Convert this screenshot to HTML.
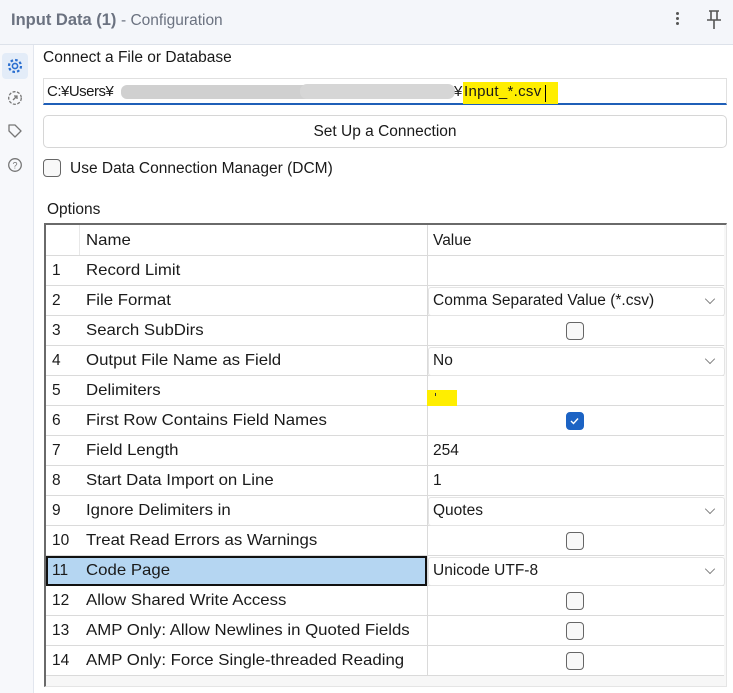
<!DOCTYPE html>
<html><head><meta charset="utf-8"><style>
*{box-sizing:border-box;margin:0;padding:0}
body{width:733px;height:693px;background:#fff;font-family:"Liberation Sans",Arial,sans-serif;position:relative;overflow:hidden;color:#1a1a1a}
.a{position:absolute}
.hdr{left:0;top:0;width:733px;height:45px;background:#f4f6fa;border-bottom:1px solid #dde2ea}
.side{left:0;top:45px;width:34px;height:648px;background:#f7f8fb;border-right:1px solid #e2e6ee}
.t{font-size:15.5px;white-space:nowrap}
.row{position:absolute;left:46px;width:678px;height:30px;border-bottom:1px solid #dadada}
.num{position:absolute;left:6px;top:6px;font-size:15.5px}
.nm{position:absolute;left:40px;top:6px;font-size:16px;white-space:nowrap;transform:scaleX(1.05);transform-origin:left}
.vc{position:absolute;left:381px;top:0;width:1px;height:30px;background:#dadada}
.val{position:absolute;left:387px;top:6px;font-size:15.5px}
.dd{position:absolute;left:383px;top:2px;width:295px;height:27px;background:#fff;border-radius:2px;box-shadow:0 0 0 1px #e4e4e4}
.dd span{position:absolute;left:4px;top:4px;font-size:15.5px;white-space:nowrap}
.dd i{position:absolute;right:10px;top:7px;width:8px;height:8px;border-right:1.3px solid #777;border-bottom:1.3px solid #777;transform:rotate(45deg) scale(.9)}
.cb{position:absolute;left:520px;top:6px;width:18px;height:18px;border:1.5px solid #666;border-radius:4px;background:#f8f8f8}
</style></head><body>
<div class="a hdr"></div>
<div class="a t" style="left:11px;top:11px;color:#6b7280;font-size:16.5px"><b>Input Data (1)</b> <span style="font-size:15.5px">- Configuration</span></div>
<div class="a" style="left:676px;top:12px;width:3px;height:3px;background:#555;border-radius:2px;box-shadow:0 5px 0 #555,0 10px 0 #555"></div>
<svg class="a" style="left:705px;top:9px" width="18" height="22" viewBox="0 0 18 22"><path d="M4 2h10M6 2v9M12 2v9M2 11h14M9 11v9" stroke="#555" stroke-width="1.6" fill="none"/></svg>
<div class="a side"></div>
<div class="a" style="left:2px;top:53px;width:26px;height:26px;background:#e3ecf8;border-radius:4px"></div>
<svg class="a" style="left:6px;top:57px" width="18" height="18" viewBox="0 0 18 18"><circle cx="9" cy="9" r="2.6" fill="none" stroke="#2b6fd0" stroke-width="1.6"/><circle cx="9" cy="9" r="6" fill="none" stroke="#2b6fd0" stroke-width="2.2" stroke-dasharray="2.6 2.1"/></svg>
<svg class="a" style="left:7px;top:90px" width="16" height="16" viewBox="0 0 16 16"><circle cx="8" cy="8" r="6.3" fill="none" stroke="#777" stroke-width="1.3" stroke-dasharray="3 1.5"/><path d="M6 10l4-4M7 6h3v3" stroke="#777" stroke-width="1.3" fill="none"/></svg>
<svg class="a" style="left:7px;top:123px" width="16" height="16" viewBox="0 0 16 16"><path d="M2 2h6l6 6-6 6-6-6z" fill="none" stroke="#777" stroke-width="1.3" stroke-linejoin="round"/></svg>
<svg class="a" style="left:7px;top:157px" width="16" height="16" viewBox="0 0 16 16"><circle cx="8" cy="8" r="6.3" fill="none" stroke="#777" stroke-width="1.3"/><text x="8" y="11.5" font-size="9" text-anchor="middle" fill="#777" font-family="Liberation Sans">?</text></svg>

<div class="a t" style="left:43px;top:49px">Connect a File or Database</div>
<div class="a" style="left:43px;top:78px;width:684px;height:27px;border:1px solid #e0e0e0;border-bottom:2px solid #1f5fb8;background:#fff"></div>
<div class="a t" style="left:47px;top:83px;font-size:15px;letter-spacing:-0.5px">C:¥Users¥</div>
<div class="a" style="left:121px;top:85px;width:195px;height:14px;background:#d0d0d0;border-radius:6px"></div>
<div class="a" style="left:300px;top:84px;width:155px;height:15px;background:#d6d6d6;border-radius:7px"></div>
<div class="a t" style="left:454px;top:83px;font-size:15px">¥</div>
<div class="a" style="left:463px;top:82px;width:95px;height:22px;background:#ffee00"></div>
<div class="a t" style="left:464px;top:83px;font-size:15px;letter-spacing:0.3px">Input_*.csv</div>
<div class="a" style="left:545px;top:85px;width:1px;height:17px;background:#000"></div>
<div class="a" style="left:43px;top:115px;width:684px;height:33px;border:1px solid #d6d6d6;border-radius:5px;background:#fff"></div>
<div class="a t" style="left:0;top:123px;width:770px;text-align:center">Set Up a Connection</div>
<div class="a" style="left:43px;top:159px;width:18px;height:18px;border:1.5px solid #666;border-radius:4px;background:#f8f8f8"></div>
<div class="a t" style="left:70px;top:160px">Use Data Connection Manager (DCM)</div>
<div class="a t" style="left:47px;top:201px">Options</div>

<div class="a" style="left:44px;top:223px;width:683px;height:464px;border:2px solid #6a6a6a;border-right:1px solid #e5e5e5;border-bottom:1px solid #e5e5e5;background:#f7f7f7"></div>
<div class="a" style="left:46px;top:225px;width:678px;height:450px;background:#fff"></div>
<div class="row" style="top:225px;height:31px"><div class="a" style="left:33px;top:0;width:1px;height:30px;background:#e8e8e8"></div><div class="nm" style="top:7px">Name</div><div class="vc" style="height:31px"></div><div class="val" style="top:7px">Value</div></div>
<div class="row" style="top:256px"><div class="num">1</div><div class="nm">Record Limit</div><div class="vc"></div></div>
<div class="row" style="top:286px"><div class="num">2</div><div class="nm">File Format</div><div class="vc"></div><div class="dd"><span>Comma Separated Value (*.csv)</span><i></i></div></div>
<div class="row" style="top:316px"><div class="num">3</div><div class="nm">Search SubDirs</div><div class="vc"></div><div class="cb"></div></div>
<div class="row" style="top:346px"><div class="num">4</div><div class="nm">Output File Name as Field</div><div class="vc"></div><div class="dd"><span>No</span><i></i></div></div>
<div class="row" style="top:376px"><div class="num">5</div><div class="nm">Delimiters</div><div class="vc"></div><div class="a" style="left:381px;top:14px;width:30px;height:16px;background:#ffee00"></div><div class="a" style="left:389px;top:17px;width:1px;height:3px;background:#333"></div></div>
<div class="row" style="top:406px"><div class="num">6</div><div class="nm">First Row Contains Field Names</div><div class="vc"></div><div class="cb" style="background:#1c63c4;border-color:#1c63c4"><svg width="15" height="15" viewBox="0 0 15 15" style="position:absolute;left:0;top:0"><path d="M4 8l2.5 2.5L11 5.5" stroke="#fff" stroke-width="1.4" fill="none"/></svg></div></div>
<div class="row" style="top:436px"><div class="num">7</div><div class="nm">Field Length</div><div class="vc"></div><div class="val">254</div></div>
<div class="row" style="top:466px"><div class="num">8</div><div class="nm">Start Data Import on Line</div><div class="vc"></div><div class="val">1</div></div>
<div class="row" style="top:496px"><div class="num">9</div><div class="nm">Ignore Delimiters in</div><div class="vc"></div><div class="dd"><span>Quotes</span><i></i></div></div>
<div class="row" style="top:526px"><div class="num">10</div><div class="nm">Treat Read Errors as Warnings</div><div class="vc"></div><div class="cb"></div></div>
<div class="row" style="top:556px"><div class="a" style="left:0;top:0;width:381px;height:30px;background:#b5d6f2;border:2px solid #111"></div><div class="num">11</div><div class="nm">Code Page</div><div class="vc"></div><div class="dd"><span>Unicode UTF-8</span><i></i></div></div>
<div class="row" style="top:586px"><div class="num">12</div><div class="nm">Allow Shared Write Access</div><div class="vc"></div><div class="cb"></div></div>
<div class="row" style="top:616px"><div class="num">13</div><div class="nm">AMP Only: Allow Newlines in Quoted Fields</div><div class="vc"></div><div class="cb"></div></div>
<div class="row" style="top:646px"><div class="num">14</div><div class="nm">AMP Only: Force Single-threaded Reading</div><div class="vc"></div><div class="cb"></div></div>
</body></html>
